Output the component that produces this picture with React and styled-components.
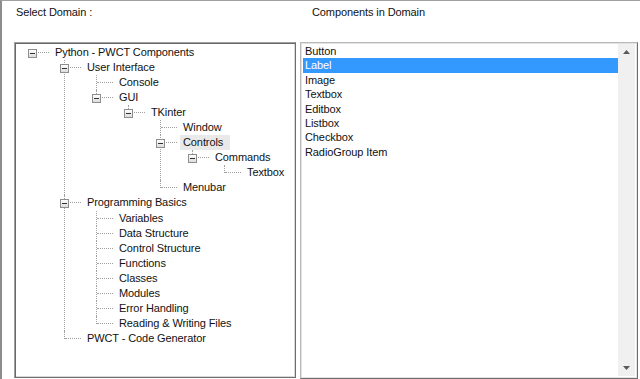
import styled, {createGlobalStyle} from "styled-components";

const GlobalStyle = createGlobalStyle`
    html, body {
        margin: 0;
        padding: 0;
        background: #ffffff;
    }
    body {
        font-family: "Liberation Sans", Arial, sans-serif;
        font-size: 11px;
        letter-spacing: -0.1px;
        color: #111;
    }
`;

const Window = styled.div`
    box-sizing: border-box;
    width: 640px;
    height: 379px;
    border-top: 1px solid #a0a0a0;
    border-left: 2px solid #8c8c8c;
    padding-left: 12px;
    display: grid;
    grid-template-columns: 282px 338px;
    grid-template-rows: 41px 1fr;
    column-gap: 4px;
    background: #fff;
`;

const Caption = styled.div`
    padding-top: 4px;
    padding-left: ${p => p.$indent}px;
    line-height: 15px;
    white-space: nowrap;
`;

const TreePanel = styled.div`
    box-sizing: border-box;
    height: 336px;
    border: 1px solid;
    border-color: #a0a0a0 #6e6e6e #6e6e6e #a0a0a0;
    box-shadow: inset 1px 1px 0 #696969, inset -1px -1px 0 #d8d8d8;
    padding: 2px 0 0 9px;
    overflow: hidden;
`;

const Branch = styled.ul`
    margin: 0;
    padding: 0 0 0 ${p => (p.$root ? 0 : 32)}px;
`;

const Item = styled.li`
    position: relative;
    list-style: none;
    &::before {
        content: "";
        display: ${p => (p.$root ? "none" : "block")};
        position: absolute;
        left: 8px;
        top: 0;
        height: ${p => (p.$last ? "8px" : "100%")};
        border-left: 1px dotted #a0a0a0;
    }
    &::after {
        content: "";
        position: absolute;
        left: 9px;
        top: 7px;
        width: 16px;
        border-top: 1px dotted #a0a0a0;
    }
`;

const Row = styled.div`
    display: flex;
    align-items: center;
    height: 15.05px;
`;

const Slot = styled.div`
    flex: none;
    width: 28px;
    height: 15px;
    display: flex;
    align-items: center;
`;

const Expander = styled.span`
    position: relative;
    z-index: 1;
    box-sizing: border-box;
    margin-left: 4px;
    margin-top: 1px;
    width: 9px;
    height: 9px;
    border: 1px solid #8e8e8e;
    background: linear-gradient(#ffffff, #dcdcdc);
    &::after {
        content: "";
        position: absolute;
        left: 1px;
        top: 3px;
        width: 5px;
        height: 1px;
        background: #303030;
    }
`;

const NodeLabel = styled.span`
    position: relative;
    z-index: 1;
    padding: 0 ${p => (p.$active ? 7 : 3)}px 0 3px;
    line-height: 15px;
    white-space: nowrap;
    background: ${p => (p.$active ? "#e9e9e9" : "transparent")};
`;

const ListPanel = styled.div`
    box-sizing: border-box;
    height: 337px;
    border: 1px solid;
    border-color: #b9b9b9 #6e6e6e #6e6e6e #b9b9b9;
    box-shadow: inset 1px 1px 0 #e2e2e2, inset -1px -1px 0 #e3e3e3;
    padding: 1px 2px 2px;
    display: flex;
`;

const ListBody = styled.div`
    flex: 1;
`;

const ListRow = styled.div`
    height: 14.4px;
    line-height: 14.4px;
    padding-left: 2px;
    white-space: nowrap;
    background: ${p => (p.$selected ? "#3399ff" : "transparent")};
    color: ${p => (p.$selected ? "#fff" : "#111")};
`;

const ScrollTrack = styled.div`
    flex: none;
    width: 17px;
    background: #f0f0f0;
    display: flex;
    flex-direction: column;
    justify-content: space-between;
    align-items: center;
    padding: 6px 0 6px;
    box-sizing: border-box;
`;

const tree = {
    label: "Python - PWCT Components",
    children: [
        {
            label: "User Interface",
            children: [
                {label: "Console"},
                {
                    label: "GUI",
                    children: [
                        {
                            label: "TKinter",
                            children: [
                                {label: "Window"},
                                {
                                    label: "Controls",
                                    active: true,
                                    children: [{label: "Commands", children: [{label: "Textbox"}]}],
                                },
                                {label: "Menubar"},
                            ],
                        },
                    ],
                },
            ],
        },
        {
            label: "Programming Basics",
            children: [
                {label: "Variables"},
                {label: "Data Structure"},
                {label: "Control Structure"},
                {label: "Functions"},
                {label: "Classes"},
                {label: "Modules"},
                {label: "Error Handling"},
                {label: "Reading & Writing Files"},
            ],
        },
        {label: "PWCT - Code Generator"},
    ],
};

const components = ["Button", "Label", "Image", "Textbox", "Editbox", "Listbox", "Checkbox", "RadioGroup Item"];

const TreeNode = ({node, last, root}) => (
    <Item $last={last} $root={root}>
        <Row>
            <Slot>{node.children && <Expander />}</Slot>
            <NodeLabel $active={node.active}>{node.label}</NodeLabel>
        </Row>
        {node.children && (
            <Branch>
                {node.children.map((child, i) => (
                    <TreeNode key={child.label} node={child} last={i === node.children.length - 1} />
                ))}
            </Branch>
        )}
    </Item>
);

const Arrow = ({down}) => (
    <svg width="7" height="4" viewBox="0 0 7 4">
        <path d={down ? "M0 0H7L3.5 4Z" : "M3.5 0L7 4H0Z"} fill="#5a5a5a" />
    </svg>
);

const App = () => {
    return (
        <>
            <GlobalStyle />
            <Window>
                <Caption $indent={2}>Select Domain :</Caption>
                <Caption $indent={12}>Components in Domain</Caption>
                <TreePanel>
                    <Branch $root>
                        <TreeNode node={tree} last root />
                    </Branch>
                </TreePanel>
                <ListPanel>
                    <ListBody>
                        {components.map(name => (
                            <ListRow key={name} $selected={name === "Label"}>
                                {name}
                            </ListRow>
                        ))}
                    </ListBody>
                    <ScrollTrack>
                        <Arrow />
                        <Arrow down />
                    </ScrollTrack>
                </ListPanel>
            </Window>
        </>
    );
};

export default App;
